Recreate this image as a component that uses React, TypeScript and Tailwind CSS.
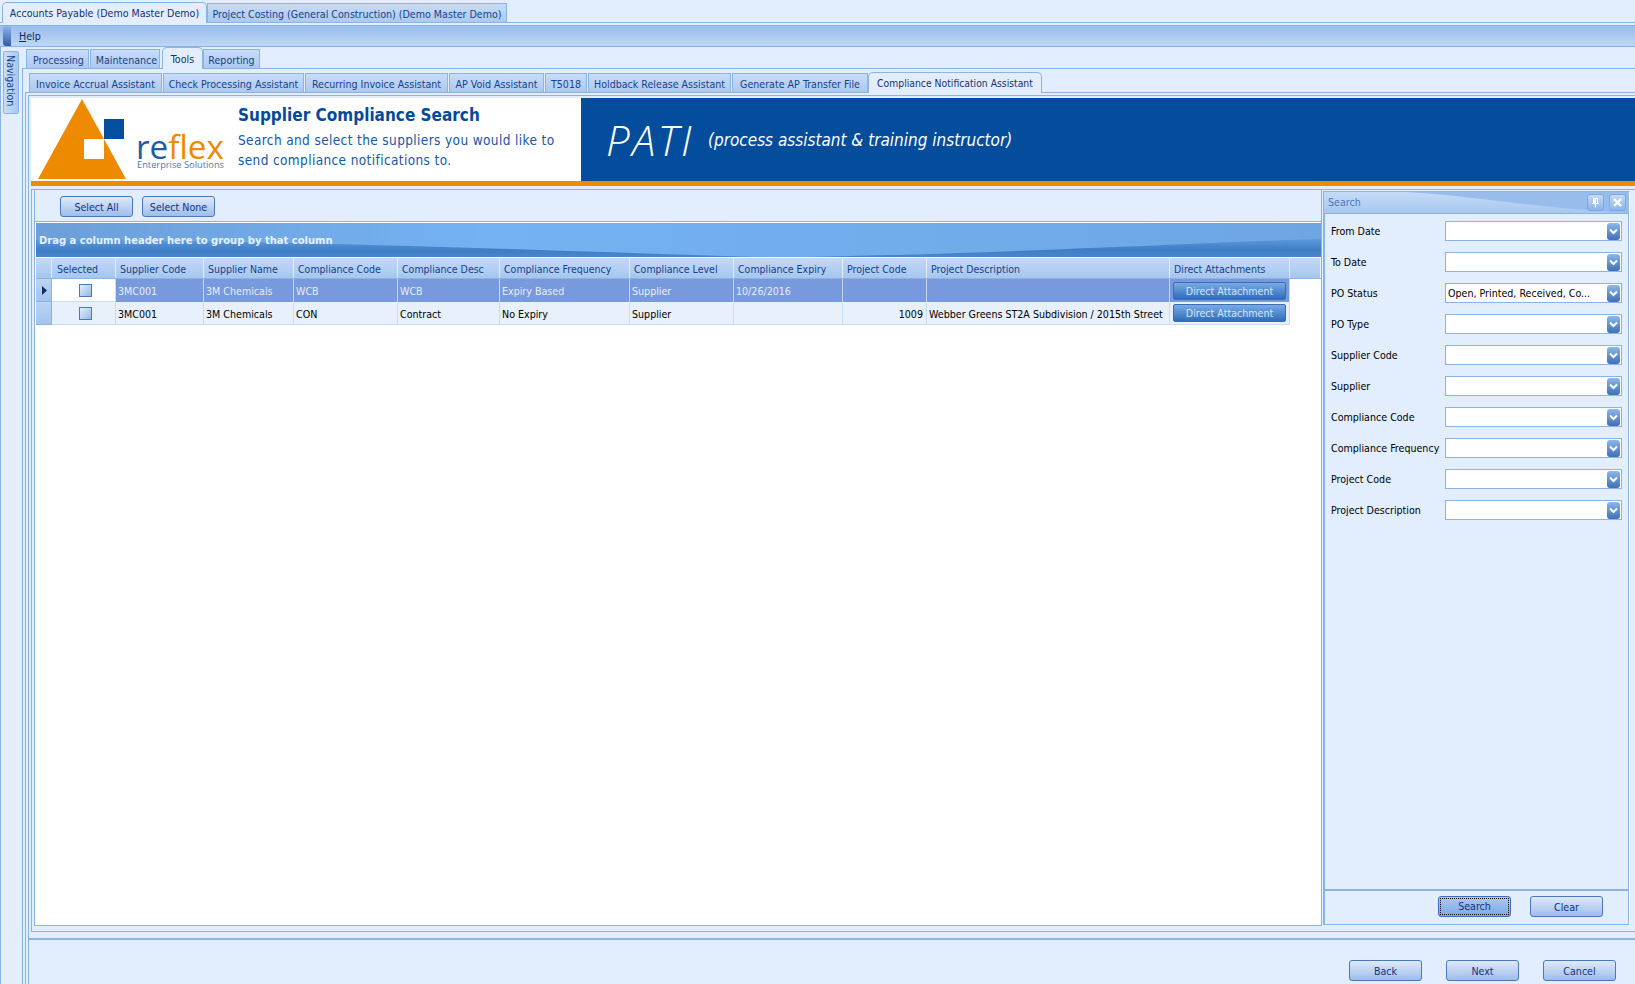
import React from "react";

const border = "border-[#8ab4e6]";

function TabTop({ label, active, className }: { label: string; active?: boolean; className: string }) {
  return active ? (
    <div className={`relative z-10 -mb-px flex items-center justify-center rounded-t-[5px] border border-b-0 ${border} bg-[#e2eefd] pt-[1px] text-[#15306b] ${className}`}>
      <span className="whitespace-nowrap">{label}</span>
    </div>
  ) : (
    <div className={`flex items-center justify-center border ${border} border-b-0 bg-linear-to-b from-[#c8dcf7] to-[#abc9f0] pt-[2px] text-[#15428b] ${className}`}>
      <span className="whitespace-nowrap">{label}</span>
    </div>
  );
}

function Btn({ label, focus }: { label: string; focus?: boolean }) {
  return (
    <div
      className={`flex h-[21px] w-[73px] items-center justify-center rounded-[3px] border text-[#15307f] ${
        focus ? "border-[#3f6fc0] bg-linear-to-b from-[#a9c9f2] to-[#7ea9e4] p-[1px]" : "border-[#4a78b8] bg-linear-to-b from-[#dfeafa] to-[#9dbde9] pt-[2px]"
      }`}
    >
      {focus ? (
        <span className="flex h-full w-full items-center justify-center border border-dotted border-black">{label}</span>
      ) : (
        label
      )}
    </div>
  );
}

function Chevron() {
  return (
    <div className="flex h-[17px] w-[13px] items-center justify-center rounded-[3px] bg-linear-to-b from-[#8db8ee] to-[#3f6fb5]">
      <svg width="9" height="7" viewBox="0 0 9 7">
        <polyline points="1,1.5 4.5,5 8,1.5" fill="none" stroke="#ffffff" strokeWidth="2" />
      </svg>
    </div>
  );
}

function Field({ label, value }: { label: string; value?: string }) {
  return (
    <div className="flex h-[20px] items-center">
      <div className="w-[120px] pl-[6px] pt-[1px] whitespace-nowrap text-black">{label}</div>
      <div className="flex h-[20px] w-[177px] items-center justify-between border border-[#8ab4e6] bg-white pl-[2px] pr-[1px] text-black">
        <span className="whitespace-nowrap">{value}</span>
        <Chevron />
      </div>
    </div>
  );
}

const gridCols =
  "grid grid-cols-[16px_64px_88px_90px_104px_102px_130px_104px_109px_84px_243px_120px_1fr]";

const headers = [
  "",
  "Selected",
  "Supplier Code",
  "Supplier Name",
  "Compliance Code",
  "Compliance Desc",
  "Compliance Frequency",
  "Compliance Level",
  "Compliance Expiry",
  "Project Code",
  "Project Description",
  "Direct Attachments",
  "",
];

function Checkbox() {
  return <div className="ml-[3px] h-[13px] w-[13px] border border-[#4f78b8] bg-linear-to-br from-[#e4effc] to-[#94b8e8]" />;
}

function Row({ cells, selected }: { cells: string[]; selected?: boolean }) {
  const cell = selected
    ? "flex items-center whitespace-nowrap border-r border-[#c4d8f4] bg-[#7899db] pl-[2px] pr-[3px] pt-[2px] text-[#e6eefb]"
    : "flex items-center whitespace-nowrap border-r border-b border-[#c9dcf5] bg-[#e8f1fb] pl-[2px] pr-[3px] pt-[2px] text-black";
  return (
    <div className={`${gridCols} h-[23px]`}>
      <div className="flex items-center justify-center border-r border-b border-[#8ab4e6] bg-linear-to-b from-[#bcd4f4] to-[#a4c3ec]">
        {selected && (
          <svg width="5" height="9" viewBox="0 0 5 9" className="ml-[2px]">
            <path d="M0 0L5 4.5L0 9Z" fill="#0f2f6b" />
          </svg>
        )}
      </div>
      <div className={`flex items-center justify-center border-r border-b border-[#c9dcf5] ${selected ? "bg-white" : "bg-[#e8f1fb]"}`}>
        <Checkbox />
      </div>
      {cells.map((c, i) => (
        <div key={i} className={`${cell} ${i === 7 ? "justify-end" : ""}`}>
          {c}
        </div>
      ))}
      <div className={`flex items-center border-r border-[#c9dcf5] pl-[3px] pr-[3px] ${selected ? "bg-[#7899db]" : "border-b bg-[#e8f1fb]"}`}>
        <div className="flex h-[18px] w-full items-center justify-center rounded-[2px] border border-[#3b6db0] bg-linear-to-b from-[#79aae6] to-[#2f6cb8] pt-[1px] text-[#d6e6fb]">
          Direct Attachment
        </div>
      </div>
    </div>
  );
}

function Swoosh() {
  return (
    <svg className="absolute inset-0 h-full w-full" viewBox="0 0 1000 100" preserveAspectRatio="none">
      <defs>
        <linearGradient id="sw" x1="0" y1="0" x2="0" y2="1">
          <stop offset="0" stopColor="#5d9ade" />
          <stop offset="0.6" stopColor="#3f7dc4" />
          <stop offset="1" stopColor="#4a86cb" />
        </linearGradient>
      </defs>
      <path d="M0 50C180 50 330 72 560 100H0Z" fill="url(#sw)" />
      <path d="M600 100C760 88 880 62 1000 46V100Z" fill="url(#sw)" />
    </svg>
  );
}

export default function App() {
  return (
    <div className="flex h-[984px] w-[1635px] flex-col overflow-hidden bg-[#e2eefd] font-['DejaVu_Sans_Condensed','Noto_Sans',sans-serif] text-[10.6px] leading-none">
      {/* top document tabs */}
      <div className={`flex h-[23px] items-end border-b ${border} pl-[2px]`}>
        <TabTop active label="Accounts Payable (Demo Master Demo)" className="h-[21px] w-[205px]" />
        <TabTop label="Project Costing (General Construction) (Demo Master Demo)" className="h-[19px] w-[300px]" />
      </div>
      <div className="h-[2px]" />
      {/* menu bar */}
      <div className={`flex h-[22px] items-center border-y ${border} bg-linear-to-b from-[#98bdec] to-[#c0d6f5] pl-[3px]`}>
        <div className="h-[20px] w-[8px] rounded-l-[3px] bg-linear-to-b from-[#8fb4e8] to-[#2f5ea8]" />
        <div className="pl-[8px] pt-[1px] text-[#10285f]">
          <span className="underline">H</span>elp
        </div>
      </div>

      <div className="flex min-h-0 flex-1">
        {/* navigation rail */}
        <div className={`w-[22px] shrink-0 border-l ${border} pl-[2px] pt-[4px]`}>
          <div className={`flex h-[63px] w-[16px] items-start justify-center rounded-[2px] border ${border} bg-linear-to-r from-[#c8dcf7] to-[#a9c8ef] pr-[1px] pt-[3px] text-[#15428b]`}>
            <span className="[writing-mode:vertical-rl]">Navigation</span>
          </div>
        </div>

        <div className="flex min-w-0 flex-1 flex-col">
          {/* second level tabs */}
          <div className="flex h-[21px] items-end pl-[4px]">
            <TabTop label="Processing" className="mr-[1px] h-[19px] w-[63px] pl-[2px]" />
            <TabTop label="Maintenance" className="mr-[2px] h-[19px] w-[70px] pl-[3px]" />
            <TabTop active label="Tools" className="h-[22px] w-[41px]" />
            <TabTop label="Reporting" className="h-[19px] w-[57px]" />
          </div>

          <div className={`flex min-h-0 flex-1 flex-col border-l border-t ${border}`}>
            {/* third level tabs */}
            <div className="flex h-[23px] items-end pl-[6px]">
              <TabTop label="Invoice Accrual Assistant" className="mr-[1px] h-[19px] w-[133px]" />
              <TabTop label="Check Processing Assistant" className="mr-[1px] h-[19px] w-[141px]" />
              <TabTop label="Recurring Invoice Assistant" className="mr-[1px] h-[19px] w-[143px]" />
              <TabTop label="AP Void Assistant" className="mr-[1px] h-[19px] w-[95px]" />
              <TabTop label="T5018" className="mr-[1px] h-[19px] w-[42px]" />
              <TabTop label="Holdback Release Assistant" className="mr-[1px] h-[19px] w-[143px]" />
              <TabTop label="Generate AP Transfer File" className="h-[19px] w-[136px]" />
              <TabTop active label="Compliance Notification Assistant" className="h-[21px] w-[174px] text-[10.3px]" />
            </div>

            <div className={`ml-[2px] flex min-h-0 flex-1 flex-col border-l border-t ${border} pt-[2px]`}>
              <div className={`ml-[2px] flex min-h-0 flex-1 flex-col border-l border-t ${border}`}>
                {/* banner */}
                <div className="ml-[2px] mt-[2px] flex h-[83px] bg-white">
                  <svg width="207" height="83" viewBox="0 0 207 83" className="shrink-0">
                    <path d="M51 1L95 81H7Z" fill="#ee8a00" />
                    <rect x="73" y="21" width="20" height="20" fill="#044e9f" />
                    <rect x="53" y="41" width="20" height="20" fill="#ffffff" />
                    <text x="105" y="61" fontFamily="'Open Sans',sans-serif" fontSize="33" textLength="88" lengthAdjust="spacingAndGlyphs">
                      <tspan fill="#1e5aa5">re</tspan>
                      <tspan fill="#ee8a00">flex</tspan>
                    </text>
                    <text x="106" y="70" fontFamily="'Open Sans',sans-serif" fontSize="9.5" fill="#5579ad" textLength="87" lengthAdjust="spacingAndGlyphs">
                      Enterprise Solutions
                    </text>
                  </svg>
                  <div className="w-[343px] shrink-0 pt-[7px]">
                    <div className="whitespace-nowrap text-[17px] font-bold leading-[20px] text-[#054a9b]">Supplier Compliance Search</div>
                    <div className="mt-[5px] whitespace-nowrap text-[13.5px] leading-[20px] tracking-[0.38px] text-[#1558a8]">
                      Search and select the suppliers you would like to
                      <br />
                      send compliance notifications to.
                    </div>
                  </div>
                  <div className="flex min-w-0 flex-1 items-center bg-[#044c9c] pl-[25px] italic text-white">
                    <span className="w-[86px] font-['Open_Sans',sans-serif] text-[42px] font-light leading-none tracking-[2.5px]">PATI</span>
                    <span className="ml-[16px] pt-[2px] text-[17px] whitespace-nowrap">(process assistant &amp; training instructor)</span>
                  </div>
                </div>
                <div className="ml-[2px] h-[5px] bg-[#ee8a00]" />

                {/* panels */}
                <div className={`ml-[2px] mt-[3px] flex h-[743px] border-y border-l ${border} pb-[5px] pl-[2px]`}>
                  {/* left box */}
                  <div className={`flex w-[1288px] shrink-0 flex-col border-x border-b ${border}`}>
                    <div className={`flex h-[32px] shrink-0 gap-[9px] border-b ${border} pl-[25px] pt-[6px]`}>
                      <Btn label="Select All" />
                      <Btn label="Select None" />
                    </div>
                    <div className="min-h-0 flex-1 bg-white pt-[1px]">
                      <div className="relative ml-[1px] h-[34px] overflow-hidden bg-linear-to-r from-[#6d9fd8] via-[#74b2f2] via-35% to-[#6ea6e4]">
                        <Swoosh />
                        <div className="relative flex h-full items-center pl-[3px] pt-[2px] text-[11.1px] font-bold text-[#e6f0fc]">
                          Drag a column header here to group by that column
                        </div>
                      </div>
                      <div className={`${gridCols} ml-[1px] mt-[1px] h-[21px] border-b ${border}`}>
                        {headers.map((h, i) => (
                          <div
                            key={i}
                            className={`flex items-center whitespace-nowrap border-r border-[#e2eefd] bg-linear-to-b from-[#c3d9f6] to-[#a6c6ee] pt-[3px] text-[10.5px] text-[#15428b] ${i === 1 ? "pl-[5px]" : "pl-[4px]"}`}
                          >
                            {h}
                          </div>
                        ))}
                      </div>
                      <div className="ml-[1px]">
                        <Row selected cells={["3MC001", "3M Chemicals", "WCB", "WCB", "Expiry Based", "Supplier", "10/26/2016", "", ""]} />
                        <Row
                          cells={["3MC001", "3M Chemicals", "CON", "Contract", "No Expiry", "Supplier", "", "1009", "Webber Greens ST2A Subdivision / 2015th Street"]}
                        />
                      </div>
                    </div>
                  </div>

                  {/* search panel */}
                  <div className={`ml-[1px] mb-[1px] mt-[1px] flex w-[307px] shrink-0 flex-col border-x border-t ${border} border-r-white`}>
                    <div className="relative flex h-[21px] shrink-0 items-center justify-between overflow-hidden bg-linear-to-b from-[#c6dbf7] to-[#a7c7ef] pl-[4px] pr-[3px]">
                      <svg className="absolute inset-0 h-full w-full" viewBox="0 0 300 21" preserveAspectRatio="none">
                        <path d="M80 0C150 4 190 14 300 21V0Z" fill="#98bdec" />
                      </svg>
                      <span className="relative text-[#4a75c0]">Search</span>
                      <div className="relative flex gap-[5px]">
                        <div className="flex h-[17px] w-[17px] items-center justify-center rounded-[3px] border border-[#7fa8dc] bg-linear-to-b from-[#c4daf7] to-[#8db4e8]">
                          <svg width="9" height="11" viewBox="0 0 9 11">
                            <path d="M2 1H7V6H8V7H5V10.5H4V7H1V6H2ZM5 2V6H6V2Z" fill="#ffffff" />
                          </svg>
                        </div>
                        <div className="flex h-[17px] w-[17px] items-center justify-center rounded-[3px] border border-[#7fa8dc] bg-linear-to-b from-[#c4daf7] to-[#8db4e8]">
                          <svg width="9" height="9" viewBox="0 0 9 9">
                            <path d="M1 1L8 8M8 1L1 8" stroke="#ffffff" strokeWidth="2.2" />
                          </svg>
                        </div>
                      </div>
                    </div>
                    <div className={`flex min-h-0 flex-1 flex-col border ${border}`}>
                      <div className="flex min-h-0 flex-1 flex-col gap-[11px] pt-[7px]">
                        <Field label="From Date" />
                        <Field label="To Date" />
                        <Field label="PO Status" value="Open, Printed, Received, Co..." />
                        <Field label="PO Type" />
                        <Field label="Supplier Code" />
                        <Field label="Supplier" />
                        <Field label="Compliance Code" />
                        <Field label="Compliance Frequency" />
                        <Field label="Project Code" />
                        <Field label="Project Description" />
                      </div>
                      <div className={`flex h-[35px] shrink-0 justify-end gap-[19px] border-t-2 ${border} pr-[25px] pt-[5px]`}>
                        <Btn label="Search" focus />
                        <Btn label="Clear" />
                      </div>
                    </div>
                  </div>
                </div>

                {/* footer */}
                <div className={`mt-[6px] flex flex-1 justify-end gap-[24px] border-t-2 ${border} pr-[19px] pt-[20px]`}>
                  <Btn label="Back" />
                  <Btn label="Next" />
                  <Btn label="Cancel" />
                </div>
              </div>
            </div>
          </div>
        </div>
      </div>
    </div>
  );
}
